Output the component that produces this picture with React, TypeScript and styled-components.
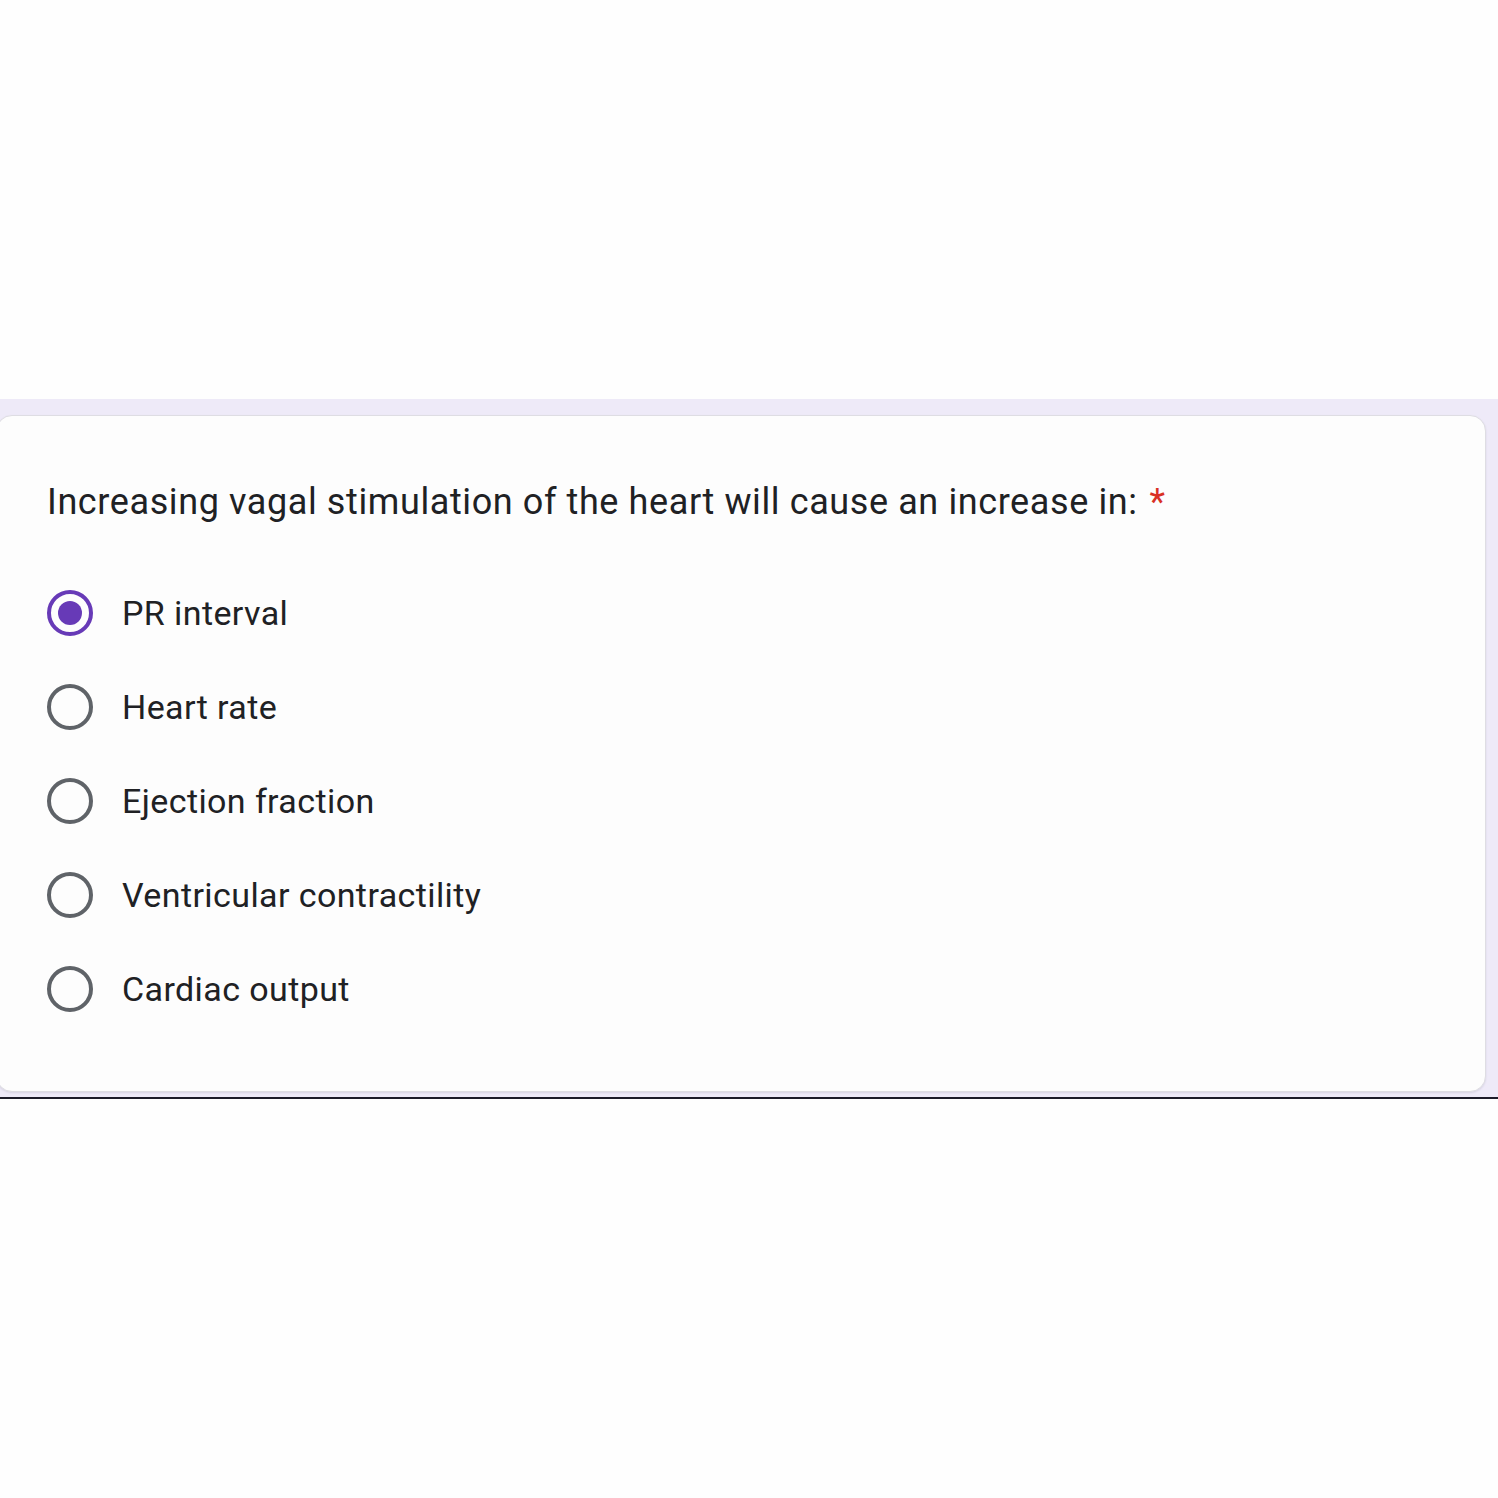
import React from "react";
import styled, { createGlobalStyle } from "styled-components";

const Global = createGlobalStyle`
  html, body { margin: 0; padding: 0; background: #fefefe; }
  body { font-family: Roboto, "Noto Sans", Arial, sans-serif; }
`;

const Page = styled.div`
  width: 1498px;
  height: 1498px;
  display: flex;
  flex-direction: column;
  background: #fefefe;
  overflow: hidden;
`;

const TopSpace = styled.div`
  height: 399px;
  flex: none;
`;

const Band = styled.div`
  height: 698px;
  box-sizing: border-box;
  background: #eeeaf8;
  padding: 16px 12px 5px 0;
  display: flex;
  flex: none;
`;

const Card = styled.div`
  flex: 1;
  margin-left: -4px;
  background: #fdfdfd;
  border: 1.5px solid #dedde3;
  border-radius: 16px;
  box-shadow: 0 1px 2px rgba(60, 60, 80, 0.12);
  box-sizing: border-box;
  padding: 62px 0 0 50px;
`;

const Question = styled.div`
  font-size: 36px;
  line-height: 48px;
  color: #202124;
  letter-spacing: 0.6px;
`;

const Star = styled.span`
  color: #d93025;
  margin-left: 12px;
`;

const Options = styled.div`
  margin-top: 40px;
  display: flex;
  flex-direction: column;
`;

const Row = styled.label`
  height: 94px;
  display: flex;
  align-items: center;
  gap: 29px;
`;

const Radio = styled.span<{ $checked?: boolean }>`
  width: 46px;
  height: 46px;
  box-sizing: border-box;
  border-radius: 50%;
  border: 4px solid ${(p) => (p.$checked ? "#673ab7" : "#5f6368")};
  display: flex;
  align-items: center;
  justify-content: center;
  flex: none;
  &::after {
    content: "";
    display: ${(p) => (p.$checked ? "block" : "none")};
    width: 24px;
    height: 24px;
    border-radius: 50%;
    background: #673ab7;
  }
`;

const OptionText = styled.span`
  font-size: 34px;
  color: #202124;
  letter-spacing: 0.4px;
`;

const BottomLine = styled.div`
  height: 2px;
  background: #1c1b29;
  flex: none;
`;

const options = [
  "PR interval",
  "Heart rate",
  "Ejection fraction",
  "Ventricular contractility",
  "Cardiac output",
];

export default function App() {
  return (
    <Page>
      <Global />
      <TopSpace />
      <Band>
        <Card>
          <Question>
            Increasing vagal stimulation of the heart will cause an increase in:
            <Star>*</Star>
          </Question>
          <Options>
            {options.map((o, i) => (
              <Row key={o}>
                <Radio $checked={i === 0} />
                <OptionText>{o}</OptionText>
              </Row>
            ))}
          </Options>
        </Card>
      </Band>
      <BottomLine />
    </Page>
  );
}
